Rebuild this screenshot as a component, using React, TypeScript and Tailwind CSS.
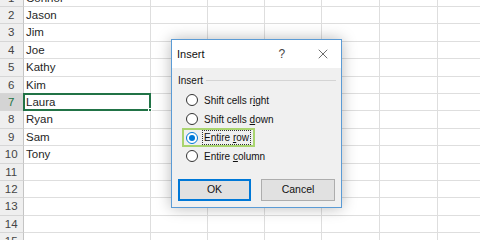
import { X } from "lucide-react";

const names = ["Connor", "Jason", "Jim", "Joe", "Kathy", "Kim", "Laura", "Ryan", "Sam", "Tony", "", "", "", "", ""];
const colWidths = ["w-[57.6px]", "w-[57.4px]", "w-[57px]", "w-[57.6px]", "w-[58px]", "w-[58px]"];

// one radio option in the dialog
const Option = ({ label, selected }: { label: React.ReactNode; selected?: boolean }) => {
    return (
        <div
            className={
                "ml-[10px] flex h-[18.7px] w-[73px] items-center gap-[4px] border-2 pl-[2px] " +
                (selected ? "border-[#a9d46f]" : "border-transparent")
            }
        >
            <div
                className={
                    "flex h-[12px] w-[12px] shrink-0 items-center justify-center rounded-full border bg-white " +
                    (selected ? "border-[#0078d7]" : "border-[#333333]")
                }
            >
                {selected && <div className="h-[6px] w-[6px] rounded-full bg-[#0078d7]" />}
            </div>
            <span
                className={
                    "whitespace-nowrap px-[1px] leading-[13px] " +
                    (selected ? "border border-dotted border-[#333333]" : "border border-transparent")
                }
            >
                {label}
            </span>
        </div>
    );
};

const App = () => {
    return (
        <div
            className="relative h-[240px] w-[480px] overflow-hidden bg-white text-[#1f1f1f]"
            style={{ fontFamily: '"Liberation Sans", Arial, sans-serif' }}
        >
            {/* sheet */}
            <div className="-mt-[10.4px] flex flex-col">
                {names.map((name, i) => {
                    const active = i === 6;
                    return (
                        <div key={i} className="flex h-[17.4px]">
                            <div
                                className={
                                    "flex w-[23.5px] shrink-0 items-center justify-center border-b border-r border-b-[#d6d6d6] border-r-[#c4c4c4] pt-[1px] text-[11.5px] " +
                                    (active ? "bg-[#d4d4d4] text-[#217346]" : "bg-[#efefef] text-[#444444]")
                                }
                            >
                                {i + 1}
                            </div>
                            <div className="relative flex w-[127px] shrink-0 items-center border-b border-r border-[#dedede] pl-[2.5px] pt-[1px] text-[11.5px]">
                                {name}
                                {active && (
                                    <div className="absolute -left-[1px] -top-[1px] h-[18.4px] w-[128px] border-2 border-[#217346]">
                                        <div className="absolute -bottom-[3px] -right-[3px] h-[4px] w-[4px] border border-white bg-[#217346]" />
                                    </div>
                                )}
                            </div>
                            {colWidths.map((w, j) => (
                                <div key={j} className={"shrink-0 border-b border-r border-[#dedede] " + w} />
                            ))}
                        </div>
                    );
                })}
            </div>

            {/* Insert dialog */}
            <div className="absolute left-[171px] top-[39px] flex h-[169px] w-[171px] flex-col border border-[#5b9bd5] bg-[#f0f0f0] shadow-[0_0_14px_rgba(0,0,0,0.28)]">
                <div className="flex h-[27.5px] shrink-0 items-center bg-white pl-[5px] text-[11px] text-[#111111]">
                    <span className="pt-[1px]">Insert</span>
                    <span className="ml-[74px] pt-[1px] text-[12px] text-[#444444]">?</span>
                    <X className="ml-[30px] h-[16px] w-[16px] text-[#222222]" strokeWidth={1} />
                </div>
                <div className="flex flex-col pt-[6px] text-[10px] text-[#111111]">
                    <div className="flex h-[14px] items-center pl-[6px] pr-[5px]">
                        <span>Insert</span>
                        <div className="ml-[3px] h-px flex-1 bg-[#d4d4d4]" />
                    </div>
                    <div className="mt-[3.5px] flex flex-col">
                        <Option label={<>Shift cells r<u>i</u>ght</>} />
                        <Option label={<>Shift cells <u>d</u>own</>} />
                        <Option label={<>Entire <u>r</u>ow</>} selected />
                        <Option label={<>Entire <u>c</u>olumn</>} />
                    </div>
                    <div className="mt-[13.5px] flex h-[22px] gap-[10px] pl-[6px]">
                        <button className="flex w-[73px] items-center justify-center border-2 border-[#0078d7] bg-[#e1e1e1] text-[10.5px] text-[#111111]">
                            OK
                        </button>
                        <button className="flex w-[74px] items-center justify-center border border-[#adadad] bg-[#e1e1e1] text-[10.5px] text-[#111111]">
                            Cancel
                        </button>
                    </div>
                </div>
            </div>
        </div>
    );
};

export default App;
